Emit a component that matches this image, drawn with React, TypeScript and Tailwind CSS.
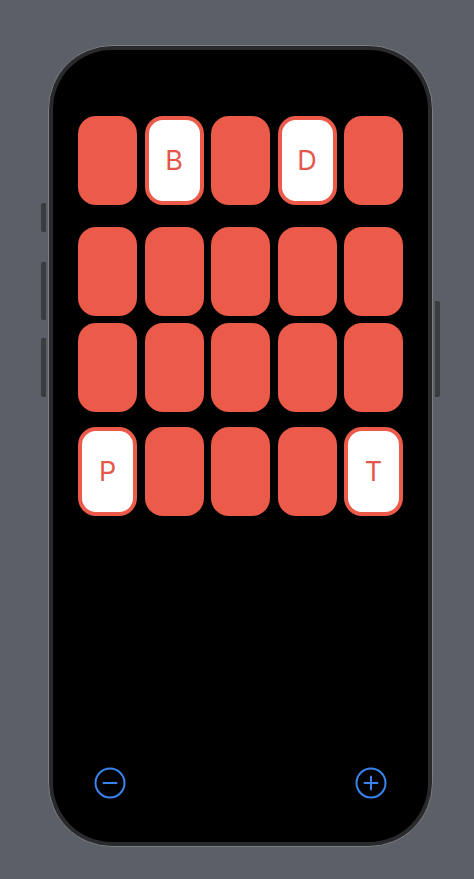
import { useState } from "react"

// which cards are face up, by row
const rows: (string | null)[][] = [
    [null, "B", null, "D", null],
    [null, null, null, null, null],
    [null, null, null, null, null],
    ["P", null, null, null, "T"],
]

function Card({ letter }: { letter: string | null }) {
    if (!letter) {
        return <div className="h-[89px] w-[59px] rounded-[18px] bg-[#ec5a4a]" />
    }
    return (
        <div className="flex h-[89px] w-[59px] items-center justify-center rounded-[18px] border-[4px] border-[#ec5a4a] bg-white">
            <span className="font-['Inter',sans-serif] text-[27px] font-normal leading-none text-[#e5574a]">
                {letter}
            </span>
        </div>
    )
}

function CardRow({ cards, className }: { cards: (string | null)[]; className?: string }) {
    return (
        <div className={"flex gap-[7.5px] " + (className ?? "")}>
            {cards.map((c, i) => (
                <Card key={i} letter={c} />
            ))}
        </div>
    )
}

function CircleButton({ plus }: { plus?: boolean }) {
    return (
        <button className="flex h-[32px] w-[32px] items-center justify-center">
            <svg width="32" height="32" viewBox="0 0 32 32" fill="none" stroke="#3a84f2" strokeWidth="2" strokeLinecap="round">
                <circle cx="16" cy="16" r="14.5" />
                <line x1="9.5" y1="16" x2="22.5" y2="16" />
                {plus && <line x1="16" y1="9.5" x2="16" y2="22.5" />}
            </svg>
        </button>
    )
}

export default function App() {
    const [count] = useState(rows.length)

    return (
        <div className="min-h-[879px] w-full bg-[#5b6068] pl-[48px] pt-[45px] font-['Inter',sans-serif]">
            <div className="relative h-[802px] w-[385px] rounded-[64px] border border-[#7a7d82] bg-[#2a2a2c] p-[4px]">
                {/* side buttons */}
                <div className="absolute left-[-8px] top-[157px] h-[29px] w-[5px] rounded-l-[2px] bg-[#3a3c40]" />
                <div className="absolute left-[-8px] top-[216px] h-[58px] w-[5px] rounded-l-[2px] bg-[#3a3c40]" />
                <div className="absolute left-[-8px] top-[292px] h-[59px] w-[5px] rounded-l-[2px] bg-[#3a3c40]" />
                <div className="absolute right-[-8px] top-[255px] h-[96px] w-[5px] rounded-r-[2px] bg-[#3a3c40]" />

                <div className="flex h-full w-full flex-col rounded-[59px] bg-black pb-[43px] pl-[25px] pr-[25px] pt-[66px]">
                    <div className="flex flex-col">
                        <CardRow cards={rows[0]} />
                        <CardRow cards={rows[1]} className="mt-[22px]" />
                        <CardRow cards={rows[2]} className="mt-[7px]" />
                        {count > 3 && <CardRow cards={rows[3]} className="mt-[15px]" />}
                    </div>
                    <div className="flex-1" />
                    <div className="flex items-center justify-between px-[16px]">
                        <CircleButton />
                        <CircleButton plus />
                    </div>
                </div>
            </div>
        </div>
    )
}
